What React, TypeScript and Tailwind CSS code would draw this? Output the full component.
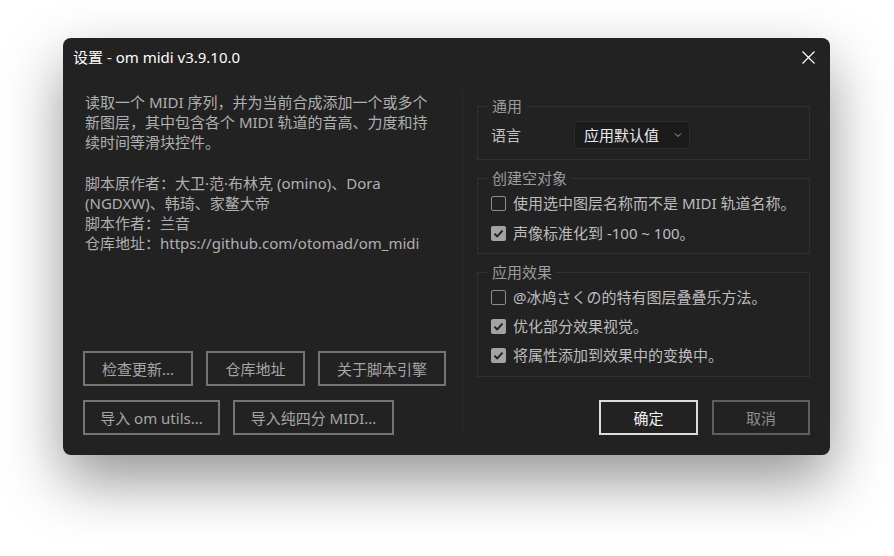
import React from "react";

const font = { fontFamily: '"Noto Sans", "Noto Sans CJK SC", sans-serif' };

function CheckBox({ checked, label }: { checked: boolean; label: string }) {
  return (
    <div className="flex items-center h-[22px] gap-[7px]">
      {checked ? (
        <span className="w-[15px] h-[15px] shrink-0 rounded-[2px] bg-[#a3a3a3] flex items-center justify-center">
          <svg width="11" height="11" viewBox="0 0 11 11">
            <polyline points="1.5,5.8 4.2,8.4 9.5,2.6" fill="none" stroke="#1e1e1e" strokeWidth="1.9" />
          </svg>
        </span>
      ) : (
        <span className="w-[15px] h-[15px] shrink-0 rounded-[2px] border-[1.5px] border-[#8c8c8c]" />
      )}
      <span className="text-[#bdbdbd] whitespace-nowrap">{label}</span>
    </div>
  );
}

function Group({ title, children, className }: { title: string; children: React.ReactNode; className?: string }) {
  return (
    <fieldset className={"border border-[#313131] px-[10px] " + (className ?? "")}>
      <legend className="px-1 text-[#9c9c9c] leading-[20px]">{title}</legend>
      <div className="pl-[3px]">{children}</div>
    </fieldset>
  );
}

export default function App() {
  const leftButtons = [
    [
      { text: "检查更新...", w: "w-[110px]" },
      { text: "仓库地址", w: "w-[99px]" },
      { text: "关于脚本引擎", w: "w-[128px]" },
    ],
    [
      { text: "导入 om utils...", w: "w-[137px]" },
      { text: "导入纯四分 MIDI...", w: "w-[161px]" },
    ],
  ];

  return (
    <div className="min-h-[556px] bg-white pt-[38px] pl-[63px]" style={font}>
      <div className="w-[767px] h-[417px] bg-[#222222] rounded-[8px] shadow-[0_26px_60px_rgba(0,0,0,0.42)] flex flex-col text-[15px] leading-[20px]">
        {/* title bar */}
        <div className="h-[38px] flex items-center pl-[10px]">
          <span className="flex-1 text-white">设置 - om midi v3.9.10.0</span>
          <button className="w-[44px] h-[38px] flex items-center justify-center">
            <svg width="13" height="13" viewBox="0 0 13 13">
              <path d="M0.5 0.5 12.5 12.5 M12.5 0.5 0.5 12.5" stroke="#ffffff" strokeWidth="1.2" />
            </svg>
          </button>
        </div>

        <div className="flex flex-1 pt-[16px] pb-[20px]">
          {/* left column */}
          <div className="w-[399px] shrink-0 pl-[20px] pr-[15px] flex flex-col justify-between">
            <div className="text-[#b0b0b0] pl-[2px] w-[352px]">
              <p>读取一个 MIDI 序列，并为当前合成添加一个或多个新图层，其中包含各个 MIDI 轨道的音高、力度和持续时间等滑块控件。</p>
              <p className="mt-[21px]">脚本原作者：大卫·范·布林克 (omino)、Dora (NGDXW)、韩琦、家鳌大帝</p>
              <p>脚本作者：兰音</p>
              <p>仓库地址：https://github.com/otomad/om_midi</p>
            </div>
            <div className="flex flex-col gap-[14px]">
              {leftButtons.map((row, i) => (
                <div key={i} className="flex gap-[13px]">
                  {row.map((b) => (
                    <button
                      key={b.text}
                      className={b.w + " h-[35px] shrink-0 border-2 border-[#747474] text-[#a6a6a6] flex items-center justify-center"}
                    >
                      {b.text}
                    </button>
                  ))}
                </div>
              ))}
            </div>
          </div>

          <div className="w-px shrink-0 bg-[#2b2b2b]" />

          {/* right column */}
          <div className="flex-1 min-w-0 pt-[4px] pl-[14px] pr-[20px] flex flex-col">
            <Group title="通用" className="pb-[10px]">
              <div className="flex items-center mt-[5px]">
                <span className="w-[83px] text-[#c0c0c0]">语言</span>
                <div className="w-[116px] h-[28px] bg-[#1b1b1b] border border-[#2c2c2c] rounded-[3px] flex items-center justify-between pl-[9px] pr-[6px]">
                  <span className="text-[#ececec]">应用默认值</span>
                  <svg width="10" height="10" viewBox="0 0 10 10">
                    <polyline points="2,3.5 5,6.5 8,3.5" fill="none" stroke="#a8a8a8" strokeWidth="1" />
                  </svg>
                </div>
              </div>
            </Group>

            <Group title="创建空对象" className="mt-[8px] pb-[9px]">
              <div className="flex flex-col gap-[8px] mt-[4px]">
                <CheckBox checked={false} label="使用选中图层名称而不是 MIDI 轨道名称。" />
                <CheckBox checked label="声像标准化到 -100 ~ 100。" />
              </div>
            </Group>

            <Group title="应用效果" className="mt-[8px] pb-[10px]">
              <div className="flex flex-col gap-[7px] mt-[4px]">
                <CheckBox checked={false} label="@冰鸠さくの的特有图层叠叠乐方法。" />
                <CheckBox checked label="优化部分效果视觉。" />
                <CheckBox checked label="将属性添加到效果中的变换中。" />
              </div>
            </Group>

            <div className="mt-auto flex justify-end gap-[14px]">
              <button className="w-[99px] h-[35px] border-2 border-[#dcdcdc] text-[#f2f2f2] flex items-center justify-center">
                确定
              </button>
              <button className="w-[98px] h-[35px] border-2 border-[#5f5f5f] text-[#8e8e8e] flex items-center justify-center">
                取消
              </button>
            </div>
          </div>
        </div>
      </div>
    </div>
  );
}
